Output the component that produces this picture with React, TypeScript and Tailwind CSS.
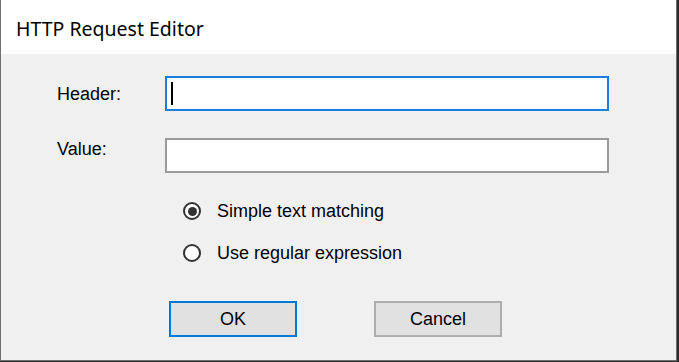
import React from 'react';

const RadioOption: React.FC<{ label: string; checked?: boolean }> = ({ label, checked }) => (
  <div className="flex h-[24px] items-center">
    <span className="flex h-[18px] w-[18px] items-center justify-center rounded-full border-2 border-[#333333] bg-white">
      {checked && <span className="h-[9px] w-[9px] rounded-full bg-[#333333]" />}
    </span>
    <span className="ml-[16px] leading-none">{label}</span>
  </div>
);

export default function App() {
  return (
    <div className="h-[362px] w-[679px] bg-[#2b2b2b] font-['Liberation_Sans',Arial,sans-serif] text-[18px] text-black">
      <div className="flex h-[361px] w-[677px] flex-col border-x border-b border-[#707070] bg-white">
        {/* title bar */}
        <div className="flex h-[54px] items-center pl-[15px] pt-[4px] font-['Noto_Sans',sans-serif] text-[19.5px]">
          HTTP Request Editor
        </div>

        <div className="flex flex-1 flex-col bg-[#f0f0f0] pt-[22px]">
          <div className="flex items-start">
            <span className="mt-[5px] w-[164px] pl-[56px]">Header:</span>
            <div className="flex h-[35px] w-[444px] items-center border-2 border-[#1c7fdc] bg-white pl-[4px]">
              <span className="h-[23px] w-[2px] bg-black" />
            </div>
          </div>

          <div className="mt-[27px] flex items-start">
            <span className="-mt-[2px] w-[164px] pl-[56px]">Value:</span>
            <div className="h-[35px] w-[444px] border-2 border-[#9a9a9a] bg-white" />
          </div>

          <div className="ml-[182px] mt-[26px] flex flex-col gap-[18px]">
            <RadioOption label="Simple text matching" checked />
            <RadioOption label="Use regular expression" />
          </div>

          <div className="ml-[168px] mt-[36px] flex gap-[77px]">
            <button className="h-[36px] w-[128px] border-2 border-[#0078d7] bg-[#e1e1e1] leading-none">OK</button>
            <button className="h-[36px] w-[128px] border-2 border-[#adadad] bg-[#e1e1e1] leading-none">Cancel</button>
          </div>
        </div>
      </div>
    </div>
  );
}
